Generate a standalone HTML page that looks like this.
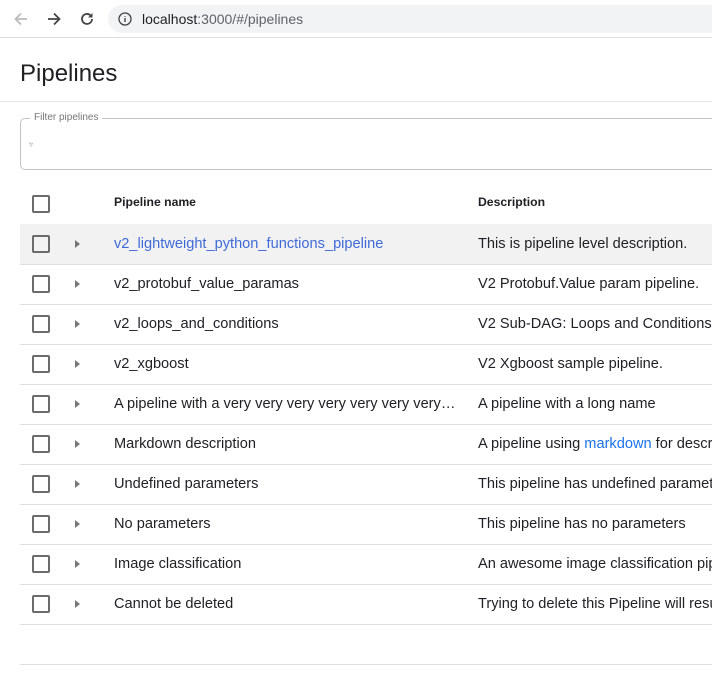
<!DOCTYPE html>
<html><head><meta charset="utf-8"><style>
body{margin:0;width:712px;height:675px;overflow:hidden;font-family:"Liberation Sans",Arial,sans-serif;background:#fff;position:relative}
.bar{position:absolute;left:0;top:0;width:712px;height:37px;background:#fff;border-bottom:1px solid #ddd}
.url{position:absolute;left:108px;top:5px;width:620px;height:28px;background:#f1f3f4;border-radius:14px}
.url .t{position:absolute;left:34px;top:6px;font-size:14px;color:#202124;white-space:nowrap}
.url .g{color:#5f6368}
h1{position:absolute;left:20px;top:60px;margin:0;font-size:24px;font-weight:400;color:#202124}
.hr{position:absolute;left:0;top:101px;width:712px;height:1px;background:#e8e8e8}
.filter{position:absolute;left:20px;top:118px;width:720px;height:50px;border:1px solid #c4c4c4;border-radius:5px}
.flabel{position:absolute;left:30px;top:112px;background:#fff;padding:0 4px;font-size:10px;color:#777}
.row{position:absolute;left:20px;width:700px;height:40px;border-bottom:1px solid #e0e0e0;font-size:14.6px;color:#202124}
.cb{position:absolute;left:12px;top:11px;width:14px;height:14px;border:2px solid #6b6b6b;border-radius:2px}
.ar{position:absolute;left:55px;top:16px;width:0;height:0;border-left:5px solid #777;border-top:4.5px solid transparent;border-bottom:4.5px solid transparent}
.n{position:absolute;left:94px;top:12px;white-space:nowrap}
.d{position:absolute;left:458px;top:12px;white-space:nowrap}
.hd{font-size:12.2px;font-weight:bold}
</style></head><body>
<div class="bar">
<svg style="position:absolute;left:12px;top:10px" width="18" height="18" viewBox="0 0 18 18"><path d="M15 9H4M9 3.5L3.5 9 9 14.5" stroke="#bbb" stroke-width="1.8" fill="none"/></svg>
<svg style="position:absolute;left:45px;top:10px" width="18" height="18" viewBox="0 0 18 18"><path d="M3 9h11M9 3.5L14.5 9 9 14.5" stroke="#444" stroke-width="1.8" fill="none"/></svg>
<svg style="position:absolute;left:78px;top:10px" width="18" height="18" viewBox="0 0 18 18"><path d="M14 9a5 5 0 1 1-1.5-3.6" stroke="#444" stroke-width="1.8" fill="none"/><path d="M14.5 3v4.5H10z" fill="#444"/></svg>
<div class="url"><svg style="position:absolute;left:10px;top:7px" width="14" height="14" viewBox="0 0 14 14"><circle cx="7" cy="7" r="6" stroke="#444" stroke-width="1.3" fill="none"/><path d="M7 6v4M7 4v.8" stroke="#444" stroke-width="1.4"/></svg><div class="t">localhost<span class="g">:3000/#/pipelines</span></div></div>
</div>
<h1>Pipelines</h1>
<div class="hr"></div>
<div class="filter"></div>
<div class="flabel">Filter pipelines</div>
<div style="position:absolute;left:29px;top:140px;font-size:8px;color:#999">&#9663;</div>
<div class="row" style="top:182px;height:42px"><div class="cb" style="top:13px"></div><div class="n hd" style="top:13px">Pipeline name</div><div class="d hd" style="top:13px">Description</div></div>
<div class="row" style="top:224px;background:#f2f2f2"><div class="cb"></div><div class="ar"></div><div class="n" style="color:#3f6ad8">v2_lightweight_python_functions_pipeline</div><div class="d">This is pipeline level description.</div></div>
<div class="row" style="top:264px"><div class="cb"></div><div class="ar"></div><div class="n">v2_protobuf_value_paramas</div><div class="d">V2 Protobuf.Value param pipeline.</div></div>
<div class="row" style="top:304px"><div class="cb"></div><div class="ar"></div><div class="n">v2_loops_and_conditions</div><div class="d">V2 Sub-DAG: Loops and Conditions</div></div>
<div class="row" style="top:344px"><div class="cb"></div><div class="ar"></div><div class="n">v2_xgboost</div><div class="d">V2 Xgboost sample pipeline.</div></div>
<div class="row" style="top:384px"><div class="cb"></div><div class="ar"></div><div class="n">A pipeline with a very very very very very very very…</div><div class="d">A pipeline with a long name</div></div>
<div class="row" style="top:424px"><div class="cb"></div><div class="ar"></div><div class="n">Markdown description</div><div class="d">A pipeline using <span style="color:#1a73e8">markdown</span> for description</div></div>
<div class="row" style="top:464px"><div class="cb"></div><div class="ar"></div><div class="n">Undefined parameters</div><div class="d">This pipeline has undefined parameters</div></div>
<div class="row" style="top:504px"><div class="cb"></div><div class="ar"></div><div class="n">No parameters</div><div class="d">This pipeline has no parameters</div></div>
<div class="row" style="top:544px"><div class="cb"></div><div class="ar"></div><div class="n">Image classification</div><div class="d">An awesome image classification pipeline</div></div>
<div class="row" style="top:584px"><div class="cb"></div><div class="ar"></div><div class="n">Cannot be deleted</div><div class="d">Trying to delete this Pipeline will result</div></div>
<div style="position:absolute;left:20px;top:664px;width:700px;height:1px;background:#e0e0e0"></div>
</body></html>
